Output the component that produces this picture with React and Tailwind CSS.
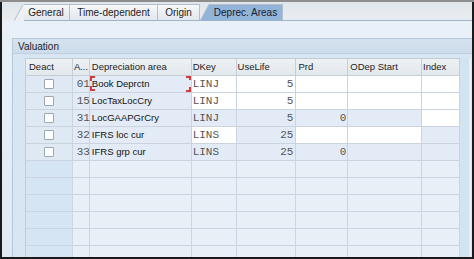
import React from 'react';

const COLS = [
  { key: 'deact', label: 'Deact', w: 'w-[47px]', pad: 'pl-[3px]' },
  { key: 'area', label: 'A...', w: 'w-[17px]', pad: 'pl-[1px]' },
  { key: 'name', label: 'Depreciation area', w: 'w-[102px]', pad: 'pl-[2px]' },
  { key: 'dkey', label: 'DKey', w: 'w-[45px]', pad: 'pl-[1px]' },
  { key: 'life', label: 'UseLife', w: 'w-[60px]', pad: 'pl-[1px]' },
  { key: 'prd', label: 'Prd', w: 'w-[52px]', pad: 'pl-[2px]' },
  { key: 'odep', label: 'ODep Start', w: 'w-[74px]', pad: 'pl-[2px]' },
  { key: 'index', label: 'Index', w: 'w-[38px]', pad: 'pl-[1px]' },
];

// editable flags: dkey, life, prd, odep, index
const ROWS = [
  { area: '01', name: 'Book Deprctn', dkey: 'LINJ', life: '5', prd: '', edit: [1, 1, 1, 1, 1], focus: true },
  { area: '15', name: 'LocTaxLocCry', dkey: 'LINJ', life: '5', prd: '', edit: [1, 1, 1, 1, 1] },
  { area: '31', name: 'LocGAAPGrCry', dkey: 'LINJ', life: '5', prd: '0', edit: [0, 0, 0, 0, 1] },
  { area: '32', name: 'IFRS loc cur', dkey: 'LINS', life: '25', prd: '', edit: [1, 0, 1, 1, 0] },
  { area: '33', name: 'IFRS grp cur', dkey: 'LINS', life: '25', prd: '0', edit: [0, 0, 0, 0, 0] },
];

const EMPTY_ROWS = 6;

function Tab({ label, active, first, width }) {
  return (
    <div className={`relative flex h-[16px] items-center justify-center ${width} ${active ? 'bg-[#93b4d9] text-[#16202c]' : 'bg-gradient-to-b from-[#f5f7f9] to-[#e3e8ed] text-[#222]'} border-t border-r border-[#b3bfcb]`}>
      {(first || active) && (
        <svg className="absolute left-[-9px] top-[-1px]" width="10" height="17" viewBox="0 0 10 17">
          <polygon points="0,17 9,0 10,0 10,17" fill={active ? '#93b4d9' : '#eceff3'} />
          <line x1="0" y1="17" x2="9" y2="0.5" stroke="#b3bfcb" strokeWidth="1" />
        </svg>
      )}
      <span>{label}</span>
    </div>
  );
}

function Checkbox() {
  return <div className="h-[10px] w-[10px] rounded-[1px] border border-[#9ba7b3] bg-white" />;
}

function FocusMarks() {
  return (
    <>
      <span className="absolute left-0 top-0 h-[5px] w-[5px] border-l-2 border-t-2 border-[#d33a3a]" />
      <span className="absolute right-0 top-0 h-[4px] w-[5px] border-r-2 border-t-2 border-[#d33a3a]" />
      <span className="absolute bottom-[1px] left-0 h-[5px] w-[5px] border-b-2 border-l-2 border-[#d33a3a]" />
      <span className="absolute bottom-0 right-0 h-[5px] w-[5px] border-b-2 border-r-2 border-[#d33a3a]" />
    </>
  );
}

function DataRow({ row }) {
  const bg = (on) => (on ? 'bg-white' : 'bg-[#e3ecf6]');
  const cell = 'h-[17px] border-r border-b border-[#cbd4de] flex items-center';
  return (
    <div className="flex">
      <div className={`${cell} w-[47px] justify-center bg-[#dfe9f4]`}>
        <Checkbox />
      </div>
      <div className={`${cell} w-[17px] justify-end overflow-visible bg-[#e3ecf6] font-['Liberation_Mono',monospace] text-[11px] text-[#555]`}>
        <span className="-mr-[1px]">{row.area}</span>
      </div>
      <div className={`${cell} relative w-[102px] bg-[#e3ecf6] pl-[2px] text-[#111]`}>
        {row.name}
        {row.focus && <FocusMarks />}
      </div>
      <div className={`${cell} w-[45px] pl-[1px] ${bg(row.edit[0])} font-['Liberation_Mono',monospace] text-[11px] text-[#555]`}>
        {row.dkey}
      </div>
      <div className={`${cell} w-[60px] justify-end pr-[2px] ${bg(row.edit[1])} font-['Liberation_Mono',monospace] text-[11px] text-[#555]`}>
        {row.life}
      </div>
      <div className={`${cell} w-[52px] justify-end pr-[1px] ${bg(row.edit[2])} font-['Liberation_Mono',monospace] text-[11px] text-[#555]`}>
        {row.prd}
      </div>
      <div className={`${cell} w-[74px] ${bg(row.edit[3])}`} />
      <div className={`${cell} w-[38px] ${bg(row.edit[4])}`} />
    </div>
  );
}

function EmptyRow() {
  return (
    <div className="flex">
      {COLS.map((c) => (
        <div
          key={c.key}
          className={`h-[17px] ${c.w} border-r border-b border-[#ccd5df] ${c.key === 'deact' ? 'bg-[#d6e5f3]' : 'bg-[#e9eff7]'}`}
        />
      ))}
    </div>
  );
}

export default function App() {
  return (
    <div className="h-[259px] w-[474px] overflow-hidden border-t-2 border-[#8d8d8d] bg-[#1a1a1a] font-['Liberation_Sans',Tahoma,sans-serif] text-[9.5px]">
      <div className="ml-[2px] flex h-[255px] w-[470px] flex-col overflow-hidden bg-[#e6ebf0]">
        {/* tab strip */}
        <div className="flex h-[19px] flex-none items-end bg-gradient-to-b from-[#e1e6eb] to-[#e9edf1] pl-[21px] text-[10px]">
          <div className="flex w-full items-end border-b border-[#9fb4ca]">
            <Tab label="General" first width="w-[47px]" />
            <Tab label="Time-dependent" width="w-[88px]" />
            <Tab label="Origin" width="w-[42px]" />
            <div className="w-[9px]" />
            <Tab label="Deprec. Areas" active width="w-[74px]" />
          </div>
        </div>

        {/* content */}
        <div className="flex flex-1 flex-col bg-gradient-to-b from-[#e9f0f8] to-[#dfe9f4] pt-[17px]">
          <div className="ml-[10px] flex flex-1 flex-col border-l border-t border-[#b7c8da]">
            <div className="flex h-[15px] flex-none items-center border-b border-[#bfcfdf] bg-gradient-to-b from-[#d5e2ef] to-[#cddcec] pl-[5px] text-[10px] text-[#222]">
              Valuation
            </div>
            <div className="flex flex-1 bg-[#d8e5f2] pl-[12px] pt-[4px]">
              <div className="flex w-[435px] flex-col border-l border-t border-[#c2ccd6] text-[#333]">
                <div className="flex">
                  {COLS.map((c) => (
                    <div
                      key={c.key}
                      className={`flex h-[17px] items-center ${c.w} ${c.pad} overflow-hidden whitespace-nowrap border-r border-b border-[#c6cfd8] bg-gradient-to-b from-[#edf1f4] to-[#e3e8ed] text-[#222]`}
                    >
                      {c.label}
                    </div>
                  ))}
                </div>
                {ROWS.map((r) => (
                  <DataRow key={r.area} row={r} />
                ))}
                {Array.from({ length: EMPTY_ROWS }).map((_, i) => (
                  <EmptyRow key={i} />
                ))}
              </div>
              <div className="w-[11px] border-r-2 border-[#e6eff8] bg-[#d2e3f2]" />
            </div>
          </div>
        </div>
      </div>
    </div>
  );
}
